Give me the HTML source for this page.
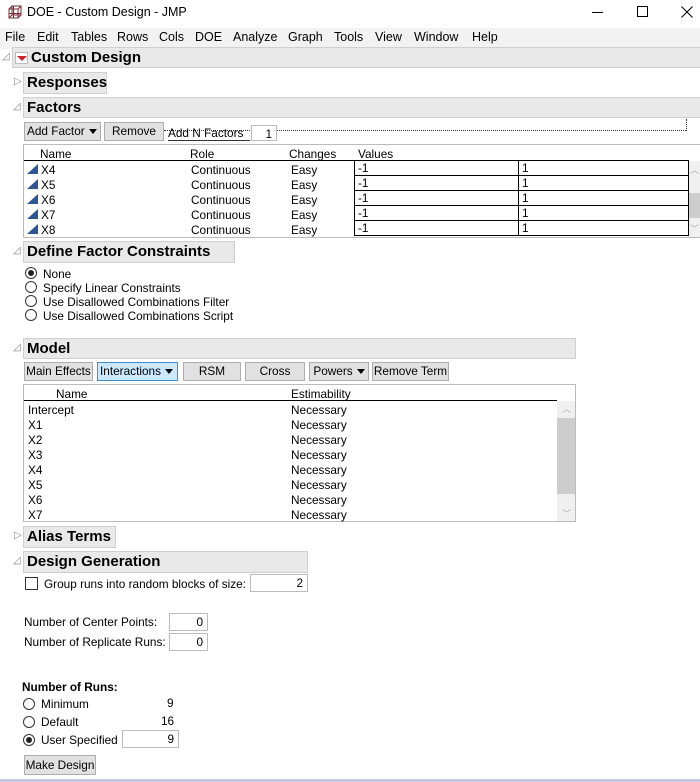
<!DOCTYPE html>
<html><head><meta charset="utf-8"><style>
*{margin:0;padding:0;box-sizing:border-box}
body{width:700px;height:782px;background:#fff;font-family:"Liberation Sans",Arial,sans-serif;font-size:11.8px;color:#000;position:relative;overflow:hidden}
.a{position:absolute;white-space:nowrap}
.hdr{position:absolute;background:#e9e9e9;border:1px solid #cfcfcf;font-weight:bold;font-size:15px;padding-left:3px;line-height:19px;white-space:nowrap}
.tri{position:absolute;width:0;height:0;border-left:5px solid transparent;border-right:5px solid transparent}
.dn{position:absolute;font-size:10px;color:#888}
.btn{position:absolute;background:#e1e1e1;border:1px solid #adadad;text-align:center;line-height:17px;height:19px;font-size:11.8px;white-space:nowrap}
.inp{position:absolute;background:#fff;border:1px solid #bbb;text-align:right;padding-right:4px;line-height:16px;font-size:11.8px}
.rad{position:absolute;width:12px;height:12px;border:1px solid #333;border-radius:50%;background:#fff}
.rad.on::after{content:"";position:absolute;left:2px;top:2px;width:6px;height:6px;border-radius:50%;background:#222}
.cell{position:absolute;border:1px solid #000;height:16px;line-height:14px;padding-left:3px;background:#fff}
.car{display:inline-block;width:0;height:0;border-left:4px solid transparent;border-right:4px solid transparent;border-top:5px solid #000;vertical-align:middle;margin-left:4px}
</style></head><body>
<svg class="a" style="left:7px;top:4px" width="16" height="16" viewBox="0 0 16 16"><path d="M2 5h9v9H2zM5 2h9v9H5zM2 5l3-3M11 5l3-3M11 14l3-3M2 14l3-3M2 9.5h12M6.5 2v12" fill="none" stroke="#7a2a3a" stroke-width="1"/></svg>
<div class="a" style="left:27px;top:5px;font-size:12.5px">DOE - Custom Design - JMP</div>
<div class="a" style="left:592px;top:12px;width:11px;height:1px;background:#000"></div>
<div class="a" style="left:637px;top:6px;width:11px;height:11px;border:1px solid #000"></div>
<svg class="a" style="left:681px;top:6px" width="12" height="12"><path d="M0.5 0.5L11.5 11.5M11.5 0.5L0.5 11.5" stroke="#000"/></svg>
<div class="a" style="left:0;top:28px;width:700px;height:18px;background:#f2f2f2"></div>
<div class="a" style="top:30px;left:5px;font-size:12.5px">File</div>
<div class="a" style="top:30px;left:37px;font-size:12.5px">Edit</div>
<div class="a" style="top:30px;left:71px;font-size:12.5px">Tables</div>
<div class="a" style="top:30px;left:117px;font-size:12.5px">Rows</div>
<div class="a" style="top:30px;left:159px;font-size:12.5px">Cols</div>
<div class="a" style="top:30px;left:195px;font-size:12.5px">DOE</div>
<div class="a" style="top:30px;left:233px;font-size:12.5px">Analyze</div>
<div class="a" style="top:30px;left:288px;font-size:12.5px">Graph</div>
<div class="a" style="top:30px;left:334px;font-size:12.5px">Tools</div>
<div class="a" style="top:30px;left:375px;font-size:12.5px">View</div>
<div class="a" style="top:30px;left:414px;font-size:12.5px">Window</div>
<div class="a" style="top:30px;left:472px;font-size:12.5px">Help</div>
<div class="a" style="left:0;top:46px;width:700px;height:3px;background:#f2f2f2"></div>
<div class="hdr" style="left:12px;top:47px;width:690px;height:21px;padding-left:18px">Custom Design</div>
<div class="dn" style="left:2px;top:51px">◿</div>
<div class="a" style="left:15px;top:52px;width:13px;height:12px;background:#fff;border:1px solid #bbb"></div>
<div class="tri" style="left:17px;top:56px;border-top:5px solid #d0202a"></div>
<div class="dn" style="left:14px;top:76px">▷</div>
<div class="hdr" style="left:23px;top:72px;width:84px;height:22px">Responses</div>
<div class="dn" style="left:13px;top:101px">◿</div>
<div class="hdr" style="left:23px;top:97px;width:680px;height:21px">Factors</div>
<div class="btn" style="left:24px;top:122px;width:77px;text-align:left;padding-left:2px">Add Factor<span class="car"></span></div>
<div class="btn" style="left:104px;top:122px;width:60px">Remove</div>
<div class="a" style="left:164px;top:130px;width:522px;border-top:1px dotted #333"></div>
<div class="a" style="left:686px;top:119px;height:12px;border-left:1px dotted #333"></div>
<div class="a" style="left:168px;top:127px;border-bottom:1px solid #333;width:82px;line-height:13px">Add N Factors</div>
<div class="inp" style="left:251px;top:125px;width:26px;height:16px">1</div>
<div class="a" style="left:23px;top:144px;width:677px;height:94px;border:1px solid #bbb;border-right:none"></div>
<div class="a" style="left:40px;top:147px">Name</div>
<div class="a" style="left:190px;top:147px">Role</div>
<div class="a" style="left:289px;top:147px">Changes</div>
<div class="a" style="left:358px;top:147px">Values</div>
<div class="a" style="left:24px;top:160px;width:664px;height:1px;background:#000"></div>
<div class="a" style="left:688px;top:161px;width:12px;height:76px;background:#f0f0f0"></div>
<div class="a" style="left:688px;top:193px;width:12px;height:25px;background:#cdcdcd"></div>
<div class="dn" style="left:690px;top:163px;font-size:9px;color:#aaa">︿</div>
<div class="dn" style="left:690px;top:222px;font-size:9px;color:#aaa">﹀</div>
<svg class="a" style="left:27px;top:164px" width="14" height="72"><g fill="#2f5597"><path d="M0 10L11 0V10Z"/><path d="M0 25L11 15V25Z"/><path d="M0 40L11 30V40Z"/><path d="M0 55L11 45V55Z"/><path d="M0 70L11 60V70Z"/></g></svg>
<div class="a" style="left:41px;top:163px;line-height:15px">X4<br>X5<br>X6<br>X7<br>X8</div>
<div class="a" style="left:191px;top:163px;line-height:15px">Continuous<br>Continuous<br>Continuous<br>Continuous<br>Continuous</div>
<div class="a" style="left:291px;top:163px;line-height:15px">Easy<br>Easy<br>Easy<br>Easy<br>Easy</div>
<div class="cell" style="left:354px;top:160px;width:165px">-1</div><div class="cell" style="left:518px;top:160px;width:171px">1</div>
<div class="cell" style="left:354px;top:175px;width:165px">-1</div><div class="cell" style="left:518px;top:175px;width:171px">1</div>
<div class="cell" style="left:354px;top:190px;width:165px">-1</div><div class="cell" style="left:518px;top:190px;width:171px">1</div>
<div class="cell" style="left:354px;top:205px;width:165px">-1</div><div class="cell" style="left:518px;top:205px;width:171px">1</div>
<div class="cell" style="left:354px;top:220px;width:165px">-1</div><div class="cell" style="left:518px;top:220px;width:171px">1</div>
<div class="dn" style="left:13px;top:245px">◿</div>
<div class="hdr" style="left:23px;top:241px;width:212px;height:22px">Define Factor Constraints</div>
<div class="rad on" style="left:25px;top:267px"></div><div class="a" style="left:43px;top:267px">None</div>
<div class="rad" style="left:25px;top:281px"></div><div class="a" style="left:43px;top:281px">Specify Linear Constraints</div>
<div class="rad" style="left:25px;top:295px"></div><div class="a" style="left:43px;top:295px">Use Disallowed Combinations Filter</div>
<div class="rad" style="left:25px;top:309px"></div><div class="a" style="left:43px;top:309px">Use Disallowed Combinations Script</div>
<div class="dn" style="left:13px;top:342px">◿</div>
<div class="hdr" style="left:23px;top:338px;width:553px;height:21px">Model</div>
<div class="btn" style="left:24px;top:362px;width:69px">Main Effects</div>
<div class="btn" style="left:97px;top:362px;width:81px;background:#cce8ff;border-color:#3c8fd6;text-align:left;padding-left:2px">Interactions<span class="car"></span></div>
<div class="btn" style="left:183px;top:362px;width:58px">RSM</div>
<div class="btn" style="left:245px;top:362px;width:60px">Cross</div>
<div class="btn" style="left:309px;top:362px;width:60px">Powers<span class="car"></span></div>
<div class="btn" style="left:372px;top:362px;width:77px">Remove Term</div>
<div class="a" style="left:23px;top:384px;width:553px;height:138px;border:1px solid #bbb"></div>
<div class="a" style="left:56px;top:387px">Name</div>
<div class="a" style="left:291px;top:387px">Estimability</div>
<div class="a" style="left:24px;top:400px;width:533px;height:1px;background:#000"></div>
<div class="a" style="left:557px;top:401px;width:18px;height:120px;background:#f0f0f0"></div>
<div class="a" style="left:557px;top:418px;width:18px;height:76px;background:#cdcdcd"></div>
<div class="dn" style="left:562px;top:402px;font-size:9px;color:#aaa">︿</div>
<div class="dn" style="left:562px;top:507px;font-size:9px;color:#aaa">﹀</div>
<div class="a" style="left:28px;top:403px;line-height:15px">Intercept<br>X1<br>X2<br>X3<br>X4<br>X5<br>X6<br>X7</div>
<div class="a" style="left:291px;top:403px;line-height:15px">Necessary<br>Necessary<br>Necessary<br>Necessary<br>Necessary<br>Necessary<br>Necessary<br>Necessary</div>
<div class="dn" style="left:14px;top:530px">▷</div>
<div class="hdr" style="left:23px;top:526px;width:93px;height:22px">Alias Terms</div>
<div class="dn" style="left:13px;top:555px">◿</div>
<div class="hdr" style="left:23px;top:551px;width:285px;height:22px">Design Generation</div>
<div class="a" style="left:25px;top:577px;width:13px;height:13px;border:1px solid #333;background:#fff"></div>
<div class="a" style="left:44px;top:577px">Group runs into random blocks of size:</div>
<div class="inp" style="left:250px;top:574px;width:58px;height:18px;line-height:16px">2</div>
<div class="a" style="left:24px;top:615px">Number of Center Points:</div>
<div class="inp" style="left:169px;top:613px;width:39px;height:18px">0</div>
<div class="a" style="left:24px;top:635px">Number of Replicate Runs:</div>
<div class="inp" style="left:169px;top:633px;width:39px;height:18px">0</div>
<div class="a" style="left:22px;top:680px;font-weight:bold">Number of Runs:</div>
<div class="rad" style="left:23px;top:698px"></div><div class="a" style="left:41px;top:697px">Minimum</div><div class="a" style="left:167px;top:696px">9</div>
<div class="rad" style="left:23px;top:716px"></div><div class="a" style="left:41px;top:715px">Default</div><div class="a" style="left:161px;top:714px">16</div>
<div class="rad on" style="left:23px;top:734px"></div><div class="a" style="left:41px;top:733px">User Specified</div>
<div class="inp" style="left:122px;top:730px;width:57px;height:18px">9</div>
<div class="btn" style="left:24px;top:755px;width:72px;height:20px;line-height:18px">Make Design</div>
<div class="a" style="left:0;top:779px;width:700px;height:3px;background:#c8c8e0"></div>
</body></html>
